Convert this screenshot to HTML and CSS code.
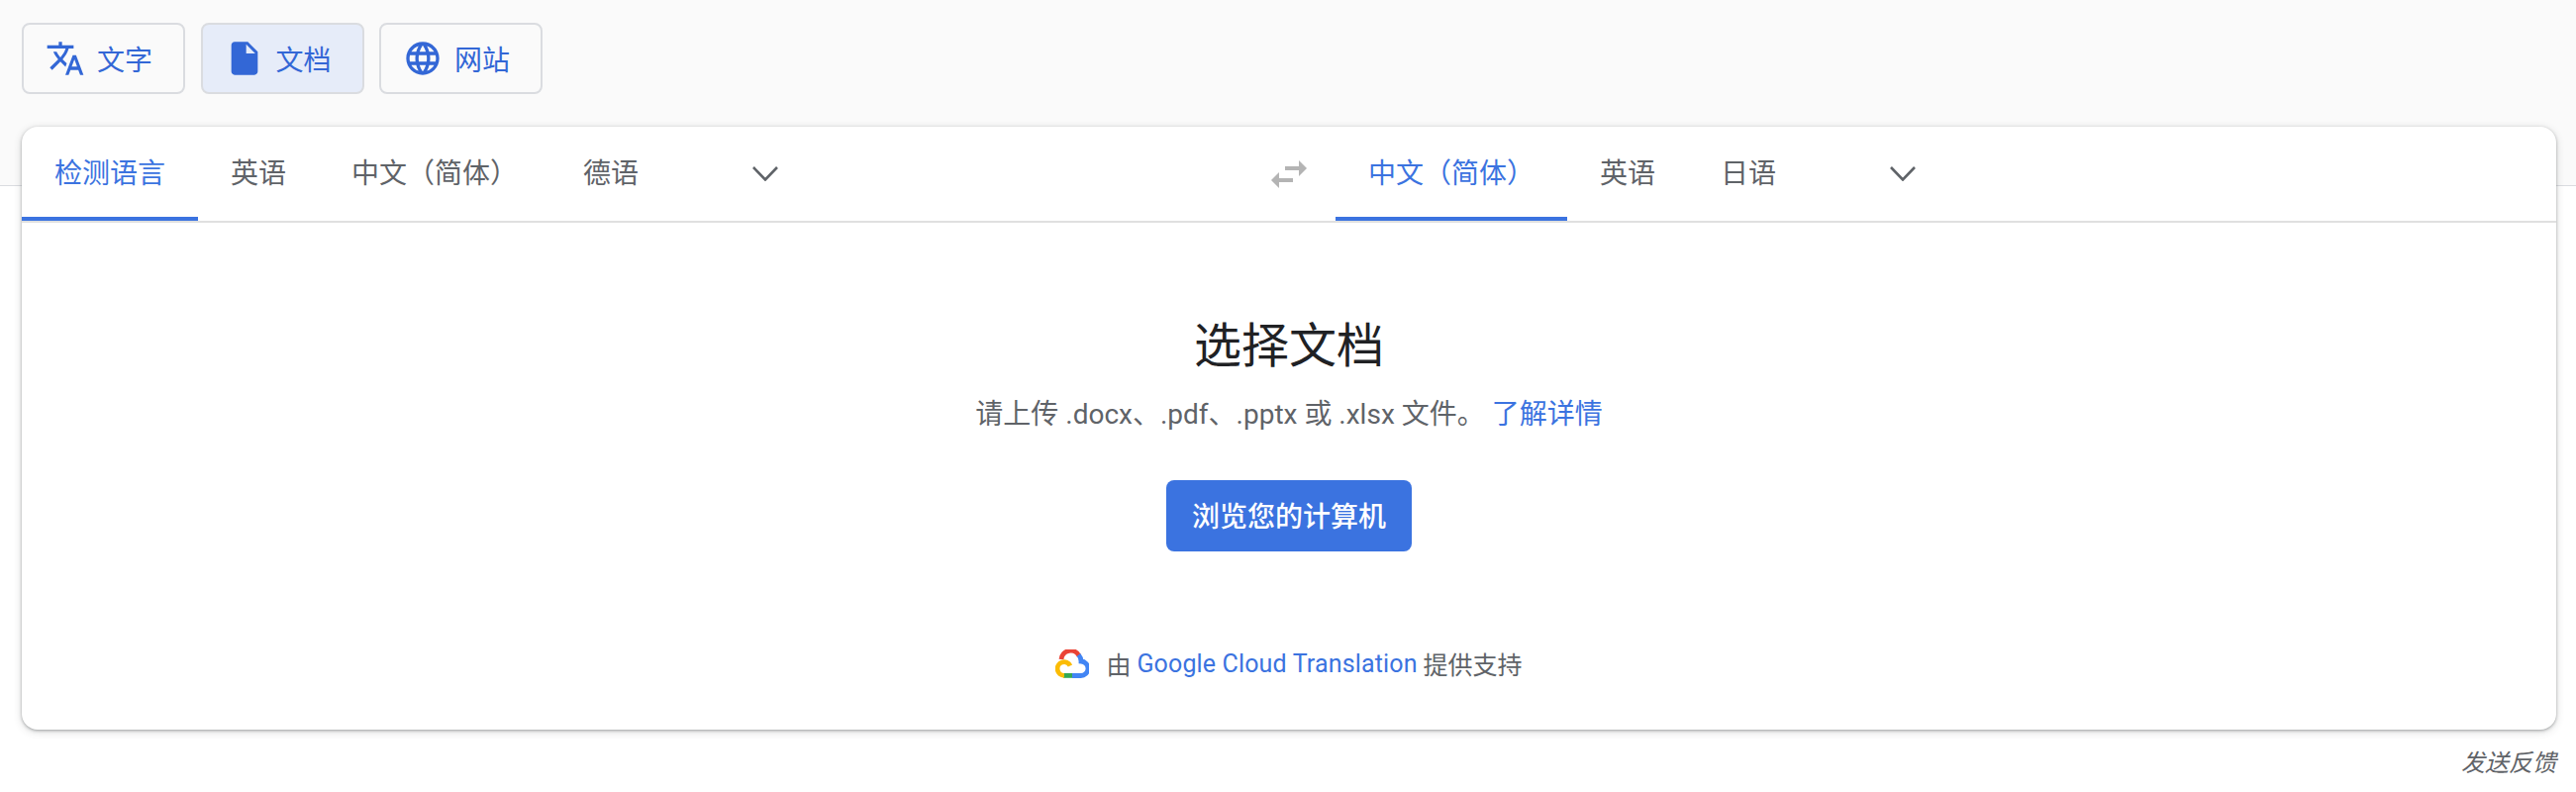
FILE: index.html
```html
<!DOCTYPE html>
<html lang="zh-CN">
<head>
    <meta charset="UTF-8">
    <meta name="viewport" content="width=device-width, initial-scale=1.0">
    <title>文档翻译</title>
    <link rel="stylesheet" href="styles.css">
</head>
<body>
    <div class="topbar">
        <button class="mode-btn" type="button">
            <svg class="mode-icon" viewBox="0 0 24 24"><path d="M12.87 15.07l-2.54-2.51.03-.03c1.74-1.94 2.98-4.17 3.71-6.53H17V4h-7V2H8v2H1v1.99h11.17C11.5 7.92 10.44 9.75 9 11.35 8.07 10.32 7.3 9.19 6.69 8h-2c.73 1.63 1.73 3.17 2.98 4.56l-5.09 5.02L4 19l5-5 3.11 3.11.76-2.04zM18.5 10h-2L12 22h2l1.12-3h4.75L21 22h2l-4.5-12zm-2.62 7l1.62-4.33L19.12 17h-3.24z"/></svg>
            文字
        </button>
        <button class="mode-btn active" type="button">
            <svg class="mode-icon" viewBox="0 0 24 24"><path d="M6 2c-1.1 0-1.99.9-1.99 2L4 20c0 1.1.89 2 1.99 2H18c1.1 0 2-.9 2-2V8l-6-6H6zm7 7V3.5L18.5 9H13z"/></svg>
            文档
        </button>
        <button class="mode-btn" type="button">
            <svg class="mode-icon" viewBox="0 0 24 24"><path d="M11.99 2C6.47 2 2 6.48 2 12s4.47 10 9.99 10C17.52 22 22 17.52 22 12S17.52 2 11.99 2zm6.93 6h-2.95c-.32-1.25-.78-2.45-1.38-3.56 1.84.63 3.37 1.91 4.33 3.56zM12 4.04c.83 1.2 1.48 2.53 1.91 3.96h-3.82c.43-1.43 1.08-2.76 1.91-3.96zM4.26 14C4.1 13.36 4 12.69 4 12s.1-1.36.26-2h3.38c-.08.66-.14 1.32-.14 2 0 .68.06 1.34.14 2H4.26zm.82 2h2.95c.32 1.25.78 2.45 1.38 3.56-1.84-.63-3.37-1.9-4.33-3.56zm2.95-8H5.08c.96-1.66 2.49-2.93 4.33-3.56C8.81 5.55 8.35 6.75 8.03 8zM12 19.96c-.83-1.2-1.48-2.53-1.91-3.96h3.82c-.43 1.43-1.08 2.76-1.91 3.96zM14.34 14H9.66c-.09-.66-.16-1.32-.16-2 0-.68.07-1.35.16-2h4.68c.09.65.16 1.32.16 2 0 .68-.07 1.34-.16 2zm.25 5.56c.6-1.11 1.06-2.31 1.38-3.56h2.95c-.96 1.65-2.49 2.93-4.33 3.56zM16.36 14c.08-.66.14-1.32.14-2 0-.68-.06-1.34-.14-2h3.38c.16.64.26 1.31.26 2s-.1 1.36-.26 2h-3.38z"/></svg>
            网站
        </button>
    </div>

    <div class="card">
        <div class="lang-bar">
            <div class="lang-side">
                <div class="tab selected">检测语言</div>
                <div class="tab">英语</div>
                <div class="tab">中文（简体）</div>
                <div class="tab">德语</div>
                <div class="more">
                    <svg class="chevron" viewBox="0 0 26 15"><polyline points="1,1 13,13.5 25,1"/></svg>
                </div>
            </div>
            <div class="swap">
                <svg class="swap-icon" viewBox="0 0 24 24"><path d="M6.99 11L3 15l3.99 4v-3H14v-2H6.99v-3zM21 9l-4-4v3h-7v2h7v3l4-4z"/></svg>
            </div>
            <div class="lang-side">
                <div class="tab selected">中文（简体）</div>
                <div class="tab">英语</div>
                <div class="tab">日语</div>
                <div class="more">
                    <svg class="chevron" viewBox="0 0 26 15"><polyline points="1,1 13,13.5 25,1"/></svg>
                </div>
            </div>
        </div>

        <div class="upload">
            <h1 class="upload-title">选择文档</h1>
            <p class="upload-text">请上传 .docx、.pdf、.pptx 或 .xlsx 文件。 <a href="#">了解详情</a></p>
            <button class="browse-btn" type="button">浏览您的计算机</button>
            <p class="credit">
                <svg class="cloud-logo" viewBox="0 0 34 29">
                    <path class="cloud-red" d="M6 10A9.5 9.5 0 0 1 24 6.5"/>
                    <path class="cloud-blue" d="M23.5 5.5A9.5 9.5 0 0 1 26 12A7.2 7.2 0 0 1 25.5 26.5H17"/>
                    <path class="cloud-green" d="M8 26.4H17"/>
                    <path class="cloud-yellow" d="M9 26.3A6.8 6.8 0 1 1 15 16.5"/>
                </svg>
                由 <a href="#">Google Cloud Translation</a> 提供支持
            </p>
        </div>
    </div>

    <div class="feedback">发送反馈</div>
</body>
</html>
```

FILE: styles.css
```css
* {
    box-sizing: border-box;
    font-family: Roboto, "Noto Sans CJK SC", sans-serif;
}
body {
    background-color: #fff;
    color: #5f6368;
    margin: 0;
}
a {
    color: #3b73e0;
    text-decoration: none;
}
.topbar {
    display: flex;
    gap: 15.5px;
    height: 188px;
    padding: 23px 22px 0;
    background-color: #fafafa;
    border-bottom: 1px solid #dadce0;
}
.mode-btn {
    display: flex;
    align-items: center;
    gap: 12px;
    width: 165px;
    height: 72px;
    padding: 0 0 0 22px;
    font-size: 28px;
    color: #3367d6;
    background-color: #fafafa;
    border: 2px solid #dadce0;
    border-radius: 8px;
}
.mode-btn.active {
    background-color: #e6ecf9;
}
.mode-icon {
    width: 40px;
    height: 40px;
    fill: #3367d6;
}
.card {
    margin: -60px 20px 0 22px;
    background-color: #fff;
    border-radius: 16px;
    box-shadow: 0 1px 3px rgba(60, 64, 67, 0.4), 0 2px 8px rgba(60, 64, 67, 0.2);
    position: relative;
}
.lang-bar {
    display: grid;
    grid-template-columns: 1fr 94px 1fr;
    height: 97px;
    border-bottom: 2px solid #e0e0e0;
}
.lang-side {
    display: flex;
}
.tab {
    display: flex;
    align-items: center;
    height: 95px;
    padding: 0 33px 2px;
    font-size: 28px;
    border-bottom: 4px solid transparent;
}
.tab.selected {
    color: #3b73e0;
    border-bottom-color: #3b73e0;
}
.more {
    display: flex;
    align-items: center;
    justify-content: center;
    width: 190px;
    height: 95px;
}
.chevron {
    width: 26px;
    height: 15px;
    fill: none;
    stroke: #5f6368;
    stroke-width: 2.6;
}
.swap {
    display: flex;
    align-items: center;
    justify-content: center;
    height: 95px;
}
.swap-icon {
    width: 48px;
    height: 48px;
    fill: #b4b4b4;
}
.upload {
    display: flex;
    flex-direction: column;
    align-items: center;
    padding: 93px 0 51px;
}
.upload-title {
    margin: 0;
    font-size: 48px;
    font-weight: 400;
    line-height: 64px;
    color: #202124;
}
.upload-text {
    margin: 17px 0 0;
    font-size: 28px;
    line-height: 40px;
}
.browse-btn {
    width: 248px;
    height: 72px;
    margin-top: 46px;
    padding-bottom: 4px;
    font-size: 28px;
    font-weight: 500;
    color: #fff;
    background-color: #3b73e0;
    border: none;
    border-radius: 8px;
}
.credit {
    display: flex;
    align-items: center;
    gap: 6px;
    height: 32px;
    margin: 97px 0 0;
    font-size: 25px;
}
.credit a {
    letter-spacing: 0.15px;
}
.cloud-logo {
    width: 34px;
    height: 29px;
    margin-right: 11px;
    fill: none;
    stroke-width: 4.8;
}
.cloud-red { stroke: #ea4335; }
.cloud-blue { stroke: #4285f4; }
.cloud-green { stroke: #34a853; }
.cloud-yellow { stroke: #fbbc04; }
.feedback {
    margin: 18px 20px 0 0;
    text-align: right;
    font-size: 24px;
    font-style: italic;
    line-height: 32px;
}
```
